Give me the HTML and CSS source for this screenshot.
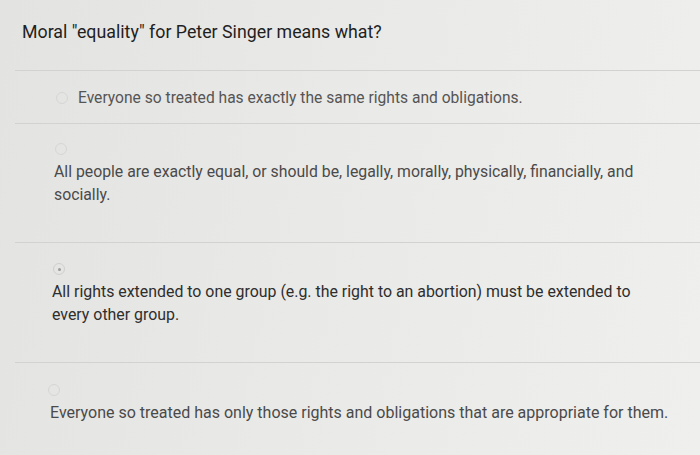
FILE: index.html
```html
<!DOCTYPE html>
<html lang="en">
<head>
<meta charset="utf-8">
<title>Question</title>
<link rel="stylesheet" href="styles.css">
</head>
<body>
<div class="page">
  <h1 class="question">Moral "equality" for Peter Singer means what?</h1>
  <ul class="options">
    <li class="option option-inline">
      <span class="radio"></span>
      <span class="label">Everyone so treated has exactly the same rights and obligations.</span>
    </li>
    <li class="option option-two">
      <span class="radio"></span>
      <span class="label">All people are exactly equal, or should be, legally, morally, physically, financially, and socially.</span>
    </li>
    <li class="option option-three selected">
      <span class="radio"></span>
      <span class="label">All rights extended to one group (e.g. the right to an abortion) must be extended to every other group.</span>
    </li>
    <li class="option option-four">
      <span class="radio"></span>
      <span class="label">Everyone so treated has only those rights and obligations that are appropriate for them.</span>
    </li>
  </ul>
</div>
</body>
</html>
```
FILE: styles.css
```css
html, body {
  margin: 0;
  padding: 0;
  height: 100%;
}
body {
  font-family: Roboto, "Liberation Sans", sans-serif;
  background: linear-gradient(100deg, #e3e3e1 0%, #e9e9e7 45%, #efefed 100%);
  overflow: hidden;
}
.page {
  height: 455px;
}
.question {
  margin: 0;
  padding: 20px 0 0 22px;
  height: 70px;
  box-sizing: border-box;
  font-size: 17.8px;
  line-height: 24px;
  font-weight: 400;
  color: #1f1f1f;
}
.options {
  list-style: none;
  margin: 0 0 0 15px;
  padding: 0;
}
.option {
  border-top: 1px solid #d2d2d0;
  font-size: 15.8px;
  line-height: 23px;
  color: #4a4a4a;
}
.radio {
  display: block;
  flex: none;
  width: 12px;
  height: 12px;
  border: 1px solid #d6d6d4;
  border-radius: 50%;
  box-sizing: border-box;
  position: relative;
}
.option-inline {
  display: flex;
  align-items: center;
  gap: 10px;
  height: 53px;
  box-sizing: border-box;
  padding: 2px 0 0 41px;
  color: #555;
  font-size: 15.6px;
}
.option-two {
  height: 119px;
  box-sizing: border-box;
  padding: 19px 40px 0 39px;
}
.option-three {
  height: 120px;
  box-sizing: border-box;
  padding: 20px 40px 0 37px;
  color: #2e2e2e;
  font-size: 15.9px;
}
.option-four {
  padding: 21px 20px 0 35px;
  font-size: 16px;
}
.option-two .radio,
.option-three .radio {
  margin: 0 0 5px 1px;
}
.option-four .radio {
  margin: 0 0 5px -2px;
}
.selected .radio {
  border-color: #cfcfcd;
}
.selected .radio::after {
  content: "";
  position: absolute;
  left: 3.5px;
  top: 3.5px;
  width: 3px;
  height: 3px;
  border-radius: 50%;
  background: #9a9a98;
}
```
